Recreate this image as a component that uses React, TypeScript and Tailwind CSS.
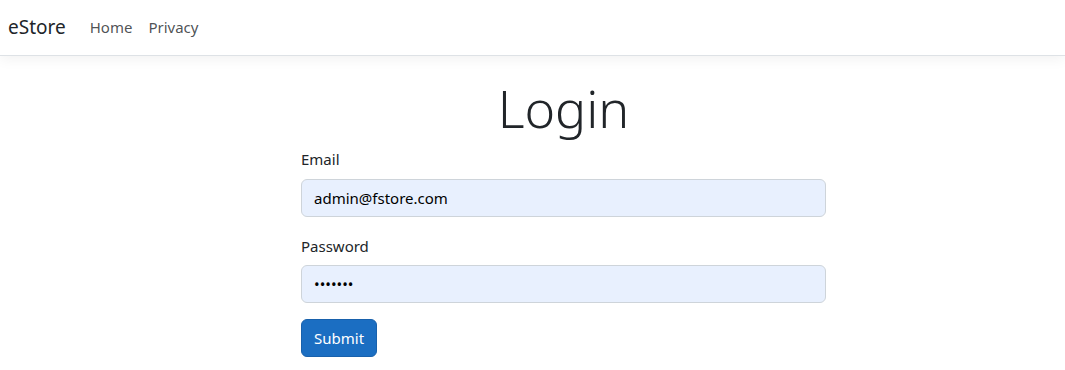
export default function App() {
  return (
    <div className="min-h-[370px] bg-white font-['Segoe_UI','Noto_Sans',sans-serif] text-[#212529]">
      {/* Navbar */}
      <nav className="flex h-[56px] items-center border-b border-[#dee2e6] bg-white px-2 shadow-[0_4px_12px_rgba(0,0,0,0.05)]">
        <a className="mr-6 text-[19px] text-[#212529]">eStore</a>
        <div className="flex items-center gap-4 text-[15px] text-[#212529]/80">
          <a>Home</a>
          <a>Privacy</a>
        </div>
      </nav>

      {/* Form */}
      <main className="ml-[301px] w-[525px] pt-[18px]">
        <h1 className="text-center text-[52px] font-light leading-[67px]">Login</h1>

        <form className="mt-[7px]">
          <div className="mb-[18px]">
            <label className="mb-[8px] block text-[15px] leading-[1.5]">Email</label>
            <input
              readOnly
              value="admin@fstore.com"
              className="block h-[38px] w-full rounded-[6px] border border-[#ced4da] bg-[#e8f0fe] px-3 text-[15px] text-black outline-none"
            />
          </div>
          <div className="mb-[16px]">
            <label className="mb-[8px] block text-[15px] leading-[1.5]">Password</label>
            <input
              readOnly
              type="password"
              value="1234567"
              className="block h-[38px] w-full rounded-[6px] border border-[#ced4da] bg-[#e8f0fe] px-3 text-[15px] text-black outline-none"
            />
          </div>
          <button
            type="button"
            className="h-[38px] rounded-[6px] border border-[#1861ac] bg-[#1b6ec2] px-3 text-[15px] text-white"
          >
            Submit
          </button>
        </form>
      </main>
    </div>
  );
}
